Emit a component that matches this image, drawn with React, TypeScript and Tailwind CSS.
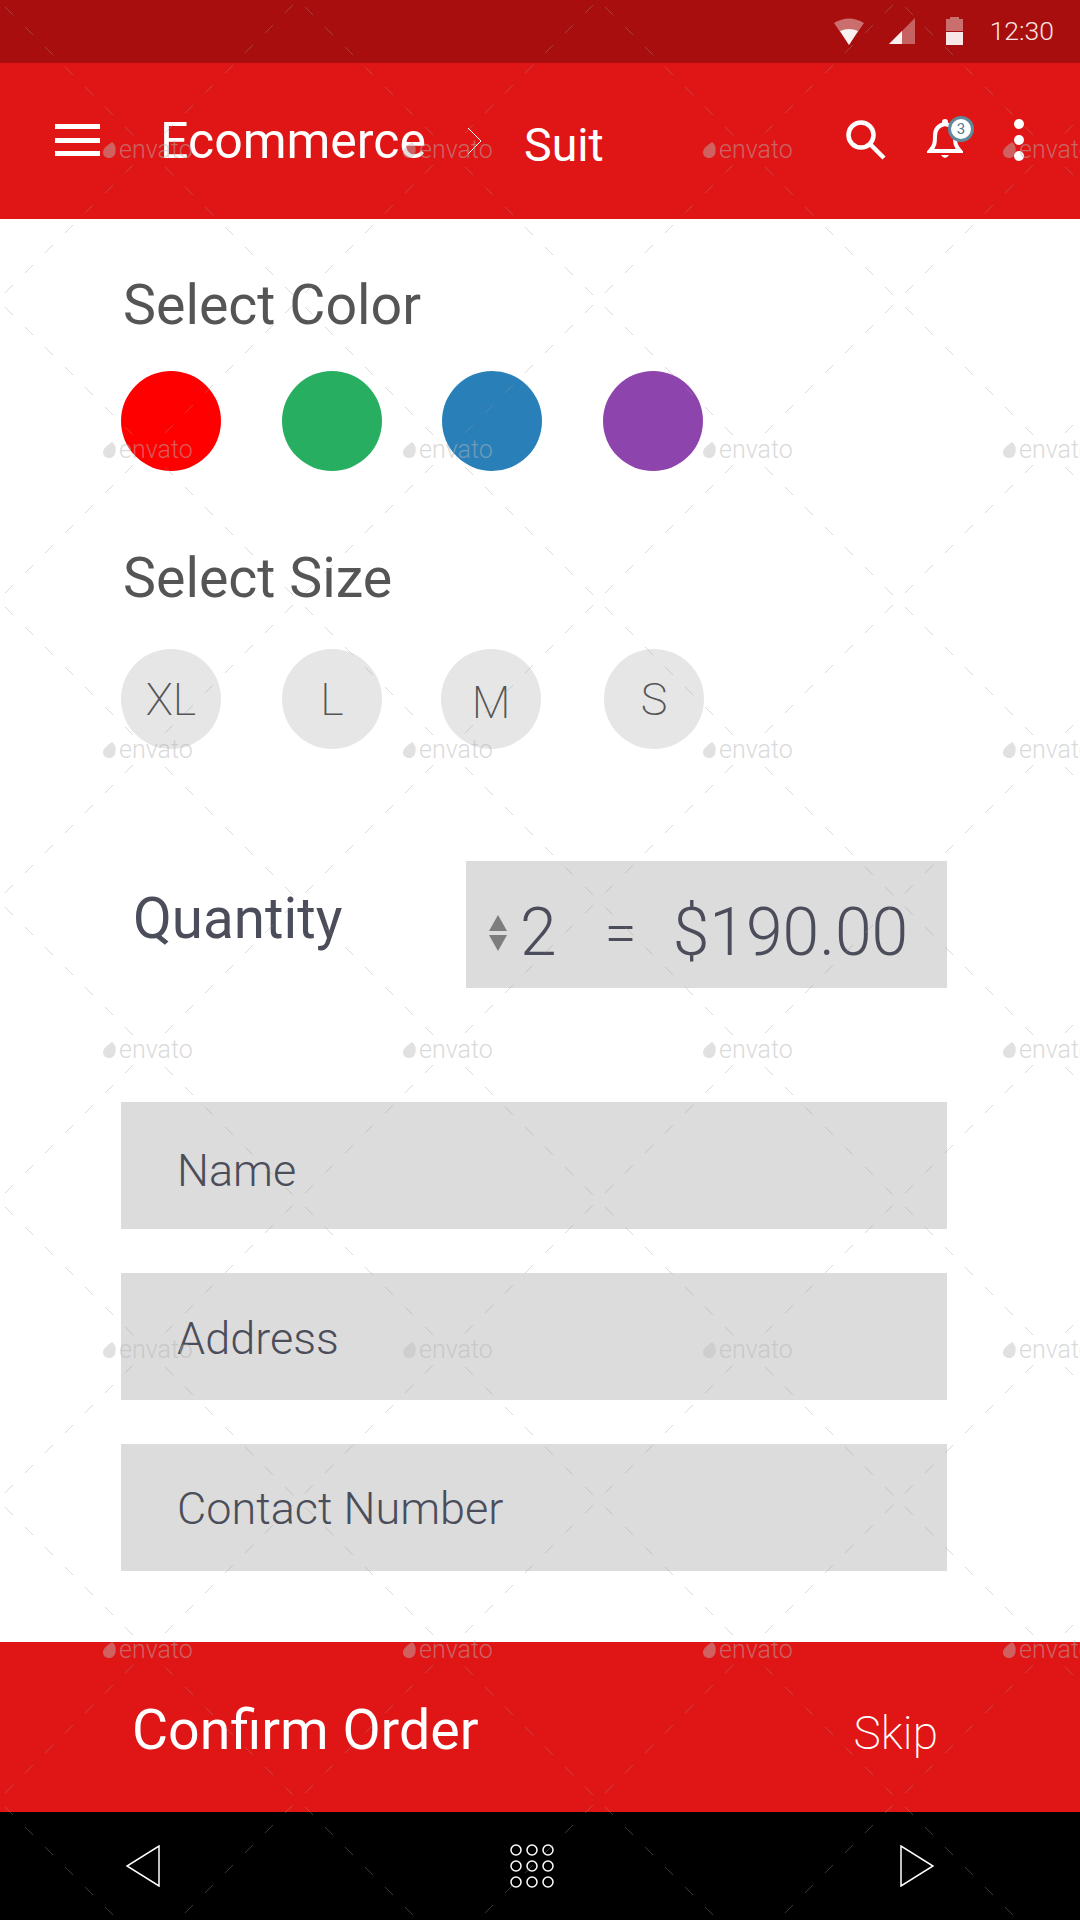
import React from 'react';

const colors = ['bg-[#ff0000]', 'bg-[#27ae60]', 'bg-[#2980b9]', 'bg-[#8e44ad]'];
const sizes = [
  { label: 'XL', box: 'ml-0', text: '' },
  { label: 'L', box: 'ml-[61px]', text: '' },
  { label: 'M', box: 'ml-[59px]', text: 'mt-[7px]' },
  { label: 'S', box: 'ml-[63px]', text: '' },
];
const fields = [
  { label: 'Name', pad: 'pt-[10px]' },
  { label: 'Address', pad: 'pt-[5px]' },
  { label: 'Contact Number', pad: 'pt-[2px]' },
];
const dashOffsets = Array.from({ length: 14 }, (_, i) => 17 + i * 20);

const StatusIcons = () => (
  <div className="flex items-center pb-[1px] pr-[26px] text-[#f8e6e6]">
    <svg width="30" height="28" viewBox="0 0 30 28">
      <path d="M0 6 Q15 -3 30 6 L15 28 Z" fill="#fff" fillOpacity="0.4" />
      <path d="M6 14 Q15 10 24 14 L15 28 Z" fill="#fff" fillOpacity="0.9" />
    </svg>
    <svg width="26" height="26" viewBox="0 0 26 26" className="ml-[25px]">
      <path d="M0 26 L26 0 V26 Z" fill="#fff" fillOpacity="0.35" />
      <path d="M0 26 L13 13 V26 Z" fill="#fff" fillOpacity="0.9" />
    </svg>
    <svg width="17" height="28" viewBox="0 0 17 28" className="ml-[31px]">
      <path d="M4 0 H13 V2 H17 V14 H0 V2 H4 Z" fill="#fff" fillOpacity="0.4" />
      <rect y="15" width="17" height="13" fill="#fff" fillOpacity="0.9" />
    </svg>
    <span className="ml-[27px] text-[26.5px] font-light leading-none">12:30</span>
  </div>
);

const Header = () => (
  <header className="flex h-[156px] items-center bg-[#e01616] pb-[2px] text-white">
    <div className="ml-[55px] flex h-[32px] w-[45px] flex-col justify-between">
      <div className="h-[5px] bg-white" />
      <div className="h-[5px] bg-white" />
      <div className="h-[5px] bg-white" />
    </div>
    <span className="ml-[60px] mt-[2px] text-[50px] leading-none">Ecommerce</span>
    <svg width="16" height="28" viewBox="0 0 16 28" className="ml-[41px] mt-[2px]" fill="none" stroke="#fff" strokeWidth="1">
      <path d="M1 1 L14 14 L1 27" />
    </svg>
    <span className="ml-[41px] mt-[10px] text-[46.5px] leading-none">Suit</span>
    <div className="ml-auto mr-[56px] flex items-center">
      <svg width="40" height="40" viewBox="0 0 40 40" fill="none" stroke="#fff" strokeWidth="4.5">
        <circle cx="15" cy="15" r="12.5" />
        <path d="M24 24 L38 38" />
      </svg>
      <div className="relative ml-[41px] mt-[-2px] h-[42px] w-[36px]">
        <svg width="36" height="42" viewBox="0 0 36 42" fill="none">
          <path d="M3 33 C8 28 8 24 8 18 C8 11 12 7 18 6 C24 7 28 11 28 18 C28 24 28 28 33 33 Z" stroke="#fff" strokeWidth="4" />
          <path d="M14 37 H22 Q18 43 14 37 Z" fill="#fff" />
          <circle cx="18" cy="4" r="3" fill="#fff" />
        </svg>
        <div className="absolute left-[21px] top-[-2px] flex h-[26px] w-[26px] items-center justify-center rounded-full border-[3px] border-[#5f8a9b] bg-white text-[15px] leading-none text-[#4c7a8c]">
          3
        </div>
      </div>
      <div className="ml-[51px] flex h-[42px] flex-col justify-between">
        <div className="h-[10px] w-[10px] rounded-full bg-white" />
        <div className="h-[10px] w-[10px] rounded-full bg-white" />
        <div className="h-[10px] w-[10px] rounded-full bg-white" />
      </div>
    </div>
  </header>
);

const NavBar = () => (
  <nav className="flex h-[108px] items-center justify-between bg-black pl-[126px] pr-[146px]">
    <svg width="34" height="42" viewBox="0 0 34 42" fill="none" stroke="#fff" strokeWidth="1.5">
      <path d="M33 1 V41 L1 21 Z" />
    </svg>
    <svg width="44" height="44" viewBox="0 0 44 44" fill="none" stroke="#fff" strokeWidth="1.5" className="ml-[4px]">
      {[6, 22, 38].map((cy) =>
        [6, 22, 38].map((cx) => <circle key={`${cx}-${cy}`} cx={cx} cy={cy} r="5" />)
      )}
    </svg>
    <svg width="34" height="42" viewBox="0 0 34 42" fill="none" stroke="#fff" strokeWidth="1.5">
      <path d="M1 1 V41 L33 21 Z" />
    </svg>
  </nav>
);

// stock-photo watermark: dashed diagonal lattice plus the repeated mark
const Watermark = () => (
  <div className="pointer-events-none absolute inset-0 z-10 overflow-hidden">
    <svg width="1080" height="1920" className="absolute left-0 top-0">
      <defs>
        <pattern id="dashes" x="148" y="150" width="300" height="300" patternUnits="userSpaceOnUse">
          <g stroke="#9a9a9a" strokeOpacity="0.4" strokeWidth="0.9">
            {dashOffsets.map((x) => (
              <React.Fragment key={x}>
                <path d={`M${x} ${x} L${x + 8} ${x + 8}`} />
                <path d={`M${x} ${300 - x} L${x + 8} ${292 - x}`} />
              </React.Fragment>
            ))}
          </g>
        </pattern>
      </defs>
      <rect width="1080" height="1920" fill="url(#dashes)" />
    </svg>
    {[150, 450, 750, 1050, 1350, 1650].map((y) =>
      [103, 403, 703, 1003].map((x) => (
        <div key={`${x}-${y}`} className="absolute flex items-center gap-[3px]" style={{ left: x, top: y - 14 }}>
          <svg width="13" height="16" viewBox="0 0 13 16" fill="#bcbcbc" fillOpacity="0.45">
            <path d="M9 0 C13 3 13 7 12.500 10 C12 14 9 16 6 16 C2.500 16 0 13.500 0 10.500 C0 6 5 3 9 0 Z" />
          </svg>
          <span className="text-[25px] font-light leading-[28px] text-[#b4b4b4]/50">envato</span>
        </div>
      ))
    )}
  </div>
);

export default function App() {
  return (
    <div className="relative flex h-[1920px] w-[1080px] flex-col overflow-hidden bg-white font-['Roboto',sans-serif]">
      <div className="flex h-[63px] items-center justify-end bg-[#a80e0e]">
        <StatusIcons />
      </div>
      <Header />

      <main className="flex-1 pl-[121px] pr-[133px]">
        <h2 className="ml-[2px] mt-[56px] text-[55.500px] leading-[62px] text-[#555555]">Select Color</h2>
        <div className="mt-[34px] flex gap-[60.5px]">
          {colors.map((c) => (
            <div key={c} className={`h-[100px] w-[100px] rounded-full ${c}`} />
          ))}
        </div>

        <h2 className="ml-[2px] mt-[77px] text-[55.500px] leading-[62px] text-[#555555]">Select Size</h2>
        <div className="mt-[39px] flex">
          {sizes.map((s) => (
            <div
              key={s.label}
              className={`flex h-[100px] w-[100px] items-center justify-center rounded-full bg-[#e6e6e6] pt-[1px] text-[45px] font-[200] text-[#555555] ${s.box}`}
            >
              <span className={s.text}>{s.label}</span>
            </div>
          ))}
        </div>

        <div className="mt-[112px] flex h-[127px] items-center justify-between">
          <span className="mb-[11px] ml-[12px] text-[56.500px] text-[#4b4d5a]">Quantity</span>
          <div className="flex h-[127px] w-[481px] items-center bg-[#dcdcdc] pl-[23px] pt-[16px] text-[#4b4d5a]">
            <svg width="18" height="36" viewBox="0 0 18 36" fill="#7d7d7d">
              <path d="M9 0 L18 16 H0 Z" />
              <path d="M0 20 H18 L9 36 Z" />
            </svg>
            <span className="ml-[13px] text-[66px] font-light leading-none">2</span>
            <span className="ml-[48px] text-[58px] font-light leading-none">=</span>
            <span className="ml-[36px] text-[66px] font-light leading-none">$190.00</span>
          </div>
        </div>

        <div className="mt-[114px] flex flex-col gap-[44px]">
          {fields.map((f) => (
            <div key={f.label} className={`flex h-[127px] items-center bg-[#dcdcdc] pl-[56px] text-[45px] font-light text-[#4b4d5a] ${f.pad}`}>
              {f.label}
            </div>
          ))}
        </div>
      </main>

      <footer className="flex h-[170px] items-center justify-between bg-[#e01616] pl-[132px] pr-[142px] text-white">
        <span className="mt-[7px] text-[55.500px]">Confirm Order</span>
        <span className="mt-[12px] text-[46px] font-[200]">Skip</span>
      </footer>
      <NavBar />
      <Watermark />
    </div>
  );
}
